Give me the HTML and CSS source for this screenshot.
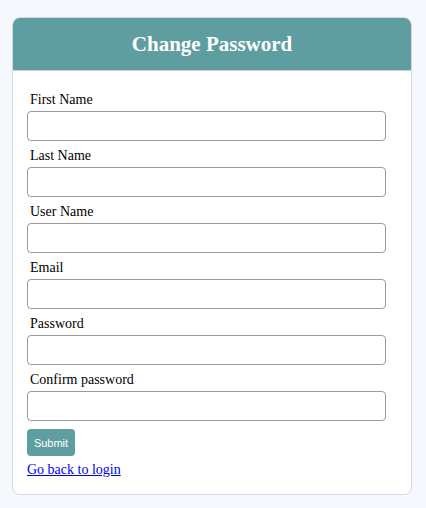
FILE: index.html
```html
<!DOCTYPE html>
<html>
<head>
<meta charset="utf-8">
<title>Change Password</title>
<link rel="stylesheet" href="styles.css">
</head>
<body>
<div class="card">
  <div class="card-header"><h2 class="title">Change Password</h2></div>
  <form class="card-body">
    <div class="field"><label class="label">First Name</label><input class="input" type="text"></div>
    <div class="field"><label class="label">Last Name</label><input class="input" type="text"></div>
    <div class="field"><label class="label">User Name</label><input class="input" type="text"></div>
    <div class="field"><label class="label">Email</label><input class="input" type="email"></div>
    <div class="field"><label class="label">Password</label><input class="input" type="password"></div>
    <div class="field"><label class="label">Confirm password</label><input class="input" type="password"></div>
    <button class="submit" type="button">Submit</button>
    <a class="back" href="#">Go back to login</a>
  </form>
</div>
</body>
</html>
```
FILE: styles.css
```css
html, body {
  margin: 0;
  padding: 0;
  background: #f7f8fe;
}
body {
  font-family: "Liberation Serif", "Times New Roman", serif;
  font-size: 14px;
  color: #000;
  padding-top: 17px;
}
.card {
  width: 400px;
  box-sizing: border-box;
  margin-left: 12px;
  background: #ffffff;
  border: 1px solid #d3d8ea;
  border-radius: 8px;
  overflow: hidden;
}
.card-header {
  height: 52px;
  background: #5f9ea0;
  border-bottom: 1px solid #c9d3e2;
  display: flex;
  align-items: center;
  justify-content: center;
}
.title {
  margin: 0;
  color: #ffffff;
  font-size: 21px;
  font-weight: bold;
  line-height: 24px;
}
.card-body {
  display: flex;
  flex-direction: column;
  align-items: flex-start;
  padding: 21px 0 0 14px;
  margin: 0;
}
.field {
  display: flex;
  flex-direction: column;
  margin-bottom: 7px;
}
.label {
  display: block;
  line-height: 16px;
  padding-left: 3px;
  margin-bottom: 3px;
}
.input {
  width: 359px;
  height: 30px;
  box-sizing: border-box;
  border: 1px solid #9a9a9a;
  border-radius: 4px;
  background: #fff;
  margin: 0;
}
.submit {
  margin-top: 1px;
  width: 48px;
  height: 27px;
  padding: 0;
  border: none;
  border-radius: 4px;
  background: #5f9ea0;
  color: #fff;
  font-family: "Liberation Sans", Arial, sans-serif;
  font-size: 11px;
}
.back {
  margin-top: 6px;
  margin-bottom: 16px;
  line-height: 16px;
  color: #0000ee;
  text-decoration: underline;
}
```
